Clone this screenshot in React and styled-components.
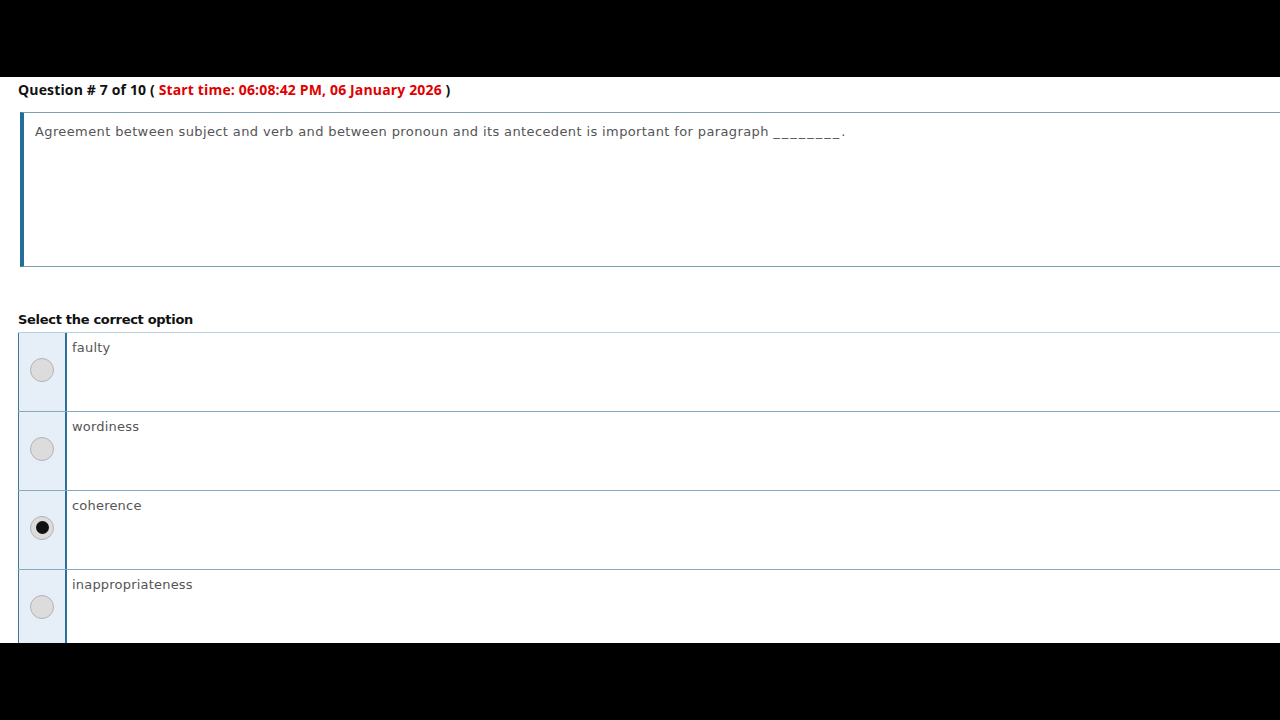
import React, { useState } from 'react';
import styled, { createGlobalStyle } from 'styled-components';

const GlobalStyle = createGlobalStyle`
  html, body {
    margin: 0;
    padding: 0;
    background: #000;
  }
  *, *::before, *::after {
    box-sizing: border-box;
  }
  body {
    font-family: "DejaVu Sans", "Liberation Sans", sans-serif;
  }
`;

const Screen = styled.div`
  display: flex;
  flex-direction: column;
  width: 1280px;
  height: 720px;
  overflow: hidden;
  background: #000;
`;

const Letterbox = styled.div`
  height: 77px;
  flex: none;
  background: #000;
`;

const Page = styled.main`
  flex: 1;
  background: #fff;
  overflow: hidden;
  padding: 4px 0 0 18px;
`;

const Heading = styled.h2`
  margin: 0;
  font-family: "Open Sans", "Liberation Sans", sans-serif;
  font-size: 14px;
  font-weight: 700;
  color: #111;
  line-height: 18px;
  letter-spacing: 0.15px;
`;

const Red = styled.span`
  color: #e00000;
`;

const QuestionBox = styled.div`
  margin: 13px -20px 0 2px;
  height: 155px;
  border: 1px solid #7d9fb4;
  border-left: 4px solid #236d9b;
  padding: 10px 11px;
  font-size: 13px;
  color: #555;
  line-height: 18px;
  letter-spacing: 0.38px;
`;

const Blank = styled.span`
  letter-spacing: 2px;
`;

const Label = styled.div`
  margin-top: 44px;
  font-size: 13px;
  font-weight: 700;
  color: #111;
  line-height: 18px;
  letter-spacing: -0.3px;
`;

const Options = styled.div`
  margin: 3px -20px 0 0;
  display: flex;
  flex-direction: column;
`;

const Row = styled.label`
  display: flex;
  flex: none;
  height: 79px;
  border-top: 1px solid ${p => (p.first ? '#b7cfdd' : '#86a9bf')};
  cursor: pointer;
`;

const RadioCell = styled.div`
  width: 49px;
  flex: none;
  display: flex;
  align-items: center;
  justify-content: center;
  background: #e6eff8;
  border-left: 1px solid #3e7aa0;
  border-right: 2px solid #2d6f97;
  padding-bottom: 5px;
`;

const Radio = styled.span`
  width: 24px;
  height: 24px;
  border-radius: 50%;
  background: #dcdcdc;
  border: 1px solid #b3b3b3;
  display: flex;
  align-items: center;
  justify-content: center;
  &::after {
    content: '';
    width: 13px;
    height: 13px;
    border-radius: 50%;
    background: ${p => (p.checked ? '#111' : 'transparent')};
  }
`;

const OptionText = styled.div`
  padding: 6px 0 0 5px;
  font-size: 13px;
  color: #555;
  line-height: 18px;
  letter-spacing: 0.2px;
`;

const options = ['faulty', 'wordiness', 'coherence', 'inappropriateness'];

export default function App() {
  const [selected, setSelected] = useState(2);

  return (
    <Screen>
      <GlobalStyle />
      <Letterbox />
      <Page>
        <Heading>
          Question # 7 of 10 ( <Red>Start time: 06:08:42 PM, 06 January 2026</Red> )
        </Heading>
        <QuestionBox>
          Agreement between subject and verb and between pronoun and its antecedent is important for paragraph <Blank>________.</Blank>
        </QuestionBox>
        <Label>Select the correct option</Label>
        <Options>
          {options.map((opt, i) => (
            <Row key={opt} first={i === 0} onClick={() => setSelected(i)}>
              <RadioCell>
                <Radio checked={selected === i} />
              </RadioCell>
              <OptionText>{opt}</OptionText>
            </Row>
          ))}
        </Options>
      </Page>
      <Letterbox />
    </Screen>
  );
}
